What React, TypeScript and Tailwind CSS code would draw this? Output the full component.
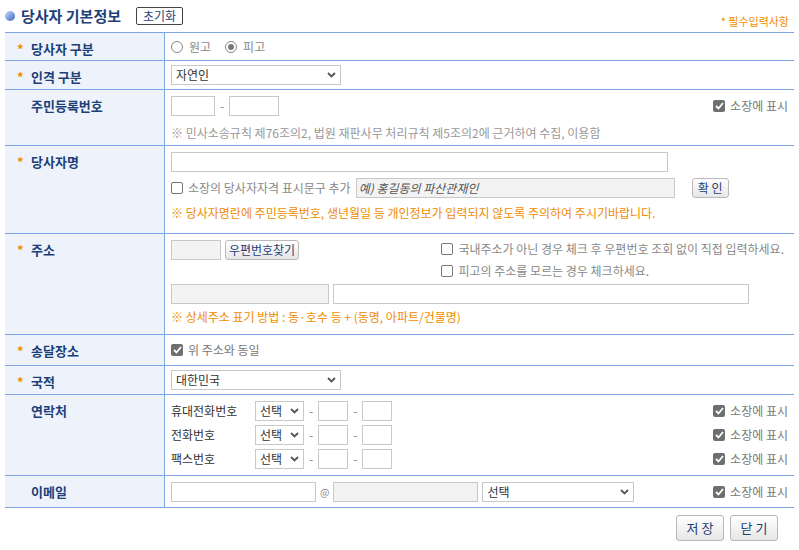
import React from "react"

const font = { fontFamily: '"Noto Sans CJK KR", "Noto Sans", sans-serif' }

function Label({ req, children }: { req?: boolean; children: React.ReactNode }) {
  return (
    <div className="flex w-[160px] shrink-0 border-r border-[#7fa6e3] bg-[#eef3fb] pl-[12px] pt-[6px] text-[13px] font-bold text-[#1d3f78]">
      <span className="w-[14px] text-[#f08c00]">{req ? "*" : ""}</span>
      {children}
    </div>
  )
}

function Row({ h, children }: { h: string; children: React.ReactNode }) {
  return <div className={`flex border-b border-[#7fa6e3] ${h}`}>{children}</div>
}

function Box({ w, gray }: { w: string; gray?: boolean }) {
  return <div className={`h-[20px] border border-[#c8c8c8] ${w} ${gray ? "bg-[#f3f3f3]" : "bg-white"}`} />
}

function Sel({ w, text }: { w: string; text: string }) {
  return (
    <div className={`flex h-[20px] items-center justify-between border border-[#c8c8c8] bg-white px-[4px] text-[12px] text-[#333] ${w}`}>
      <span>{text}</span>
      <svg width="9" height="6" viewBox="0 0 9 6"><path d="M1 1l3.5 3.5L8 1" stroke="#555" strokeWidth="1.8" fill="none" /></svg>
    </div>
  )
}

function Check({ on }: { on?: boolean }) {
  return on ? (
    <span className="flex h-[12px] w-[12px] items-center justify-center rounded-[2px] bg-[#6f6f6f]">
      <svg width="9" height="8" viewBox="0 0 9 8"><path d="M1 4l2.5 2.5L8 1" stroke="white" strokeWidth="1.8" fill="none" /></svg>
    </span>
  ) : (
    <span className="h-[12px] w-[12px] rounded-[2px] border border-[#777] bg-white" />
  )
}

function Btn({ children, w }: { children: React.ReactNode; w: string }) {
  return (
    <div className={`flex h-[20px] items-center justify-center rounded-[3px] border border-[#b9b9b9] bg-gradient-to-b from-white to-[#e6e6e6] text-[12px] text-[#1d3f78] ${w}`}>
      {children}
    </div>
  )
}

function Show() {
  return (
    <span className="flex items-center gap-[5px] text-[12px] text-[#777]">
      <Check on />소장에 표시
    </span>
  )
}

export default function App() {
  return (
    <div className="h-[550px] w-[799px] bg-white text-[12px]" style={font}>
      <div className="flex h-[32px] items-center px-[5px]">
        <span className="h-[10px] w-[10px] rounded-full bg-gradient-to-br from-[#cfe0ff] to-[#3a64b8]" />
        <span className="ml-[6px] text-[15px] font-bold text-[#1d3f78]">당사자 기본정보</span>
        <span className="ml-[15px] flex h-[18px] items-center rounded-[2px] border border-[#444] px-[6px] text-[12px] text-[#1d3f78]">초기화</span>
        <span className="ml-auto mr-[5px] mt-[10px] text-[11px] text-[#f08c00]">* 필수입력사항</span>
      </div>
      <div className="mx-[5px] border-t border-[#7fa6e3]">
        <Row h="h-[28px]">
          <Label req>당사자 구분</Label>
          <div className="flex items-center gap-[6px] pl-[6px] text-[12px] text-[#888]">
            <span className="h-[12px] w-[12px] rounded-full border border-[#888]" />원고
            <span className="ml-[8px] flex h-[12px] w-[12px] items-center justify-center rounded-full border border-[#888]"><span className="h-[6px] w-[6px] rounded-full bg-[#777]" /></span>피고
          </div>
        </Row>
        <Row h="h-[29px]">
          <Label req>인격 구분</Label>
          <div className="flex items-center pl-[6px]"><Sel w="w-[170px]" text="자연인" /></div>
        </Row>
        <Row h="h-[56px]">
          <Label>주민등록번호</Label>
          <div className="flex flex-1 flex-col gap-[8px] px-[6px] pt-[6px]">
            <div className="flex items-center">
              <Box w="w-[44px]" /><span className="mx-[5px] text-[#888]">-</span><Box w="w-[50px]" />
              <span className="ml-auto"><Show /></span>
            </div>
            <div className="text-[12px] text-[#999]">※ 민사소송규칙 제76조의2, 법원 재판사무 처리규칙 제5조의2에 근거하여 수집, 이용함</div>
          </div>
        </Row>
        <Row h="h-[88px]">
          <Label req>당사자명</Label>
          <div className="flex flex-1 flex-col gap-[6px] px-[6px] pt-[6px]">
            <Box w="w-[497px]" />
            <div className="flex items-center gap-[5px] text-[12px] text-[#888]">
              <Check />소장의 당사자자격 표시문구 추가
              <div className="flex h-[20px] w-[319px] items-center border border-[#c8c8c8] bg-[#f3f3f3] px-[2px] italic text-[#555]">예) 홍길동의 파산관재인</div>
              <span className="ml-[12px]"><Btn w="w-[37px]">확 인</Btn></span>
            </div>
            <div className="text-[12px] text-[#f08c00]">※ 당사자명란에 주민등록번호, 생년월일 등 개인정보가 입력되지 않도록 주의하여 주시기바랍니다.</div>
          </div>
        </Row>
        <Row h="h-[101px]">
          <Label req>주소</Label>
          <div className="flex flex-1 flex-col px-[6px] pt-[6px]">
            <div className="flex">
              <Box w="w-[50px]" gray />
              <span className="ml-[4px]"><Btn w="w-[74px]">우편번호찾기</Btn></span>
              <div className="ml-auto flex flex-col gap-[4px] pr-[4px] text-[12px] text-[#888]">
                <span className="flex items-center gap-[5px]"><Check />국내주소가 아닌 경우 체크 후 우편번호 조회 없이 직접 입력하세요.</span>
                <span className="flex items-center gap-[5px]"><Check />피고의 주소를 모르는 경우 체크하세요.</span>
              </div>
            </div>
            <div className="mt-[4px] flex gap-[4px]"><Box w="w-[158px]" gray /><Box w="w-[416px]" /></div>
            <div className="mt-[4px] text-[12px] text-[#f08c00]">※ 상세주소 표기 방법 : 동·호수 등 + (동명, 아파트/건물명)</div>
          </div>
        </Row>
        <Row h="h-[31px]">
          <Label req>송달장소</Label>
          <div className="flex items-center gap-[5px] pl-[6px] text-[12px] text-[#777]"><Check on />위 주소와 동일</div>
        </Row>
        <Row h="h-[29px]">
          <Label req>국적</Label>
          <div className="flex items-center pl-[6px]"><Sel w="w-[170px]" text="대한민국" /></div>
        </Row>
        <Row h="h-[81px]">
          <Label>연락처</Label>
          <div className="flex flex-1 flex-col gap-[4px] px-[6px] pt-[6px]">
            {["휴대전화번호", "전화번호", "팩스번호"].map((t) => (
              <div key={t} className="flex items-center text-[12px] text-[#333]">
                <span className="w-[84px]">{t}</span>
                <Sel w="w-[49px]" text="선택" />
                <span className="mx-[5px] text-[#888]">-</span><Box w="w-[30px]" />
                <span className="mx-[5px] text-[#888]">-</span><Box w="w-[30px]" />
                <span className="ml-auto"><Show /></span>
              </div>
            ))}
          </div>
        </Row>
        <Row h="h-[32px]">
          <Label>이메일</Label>
          <div className="flex flex-1 items-center px-[6px]">
            <Box w="w-[145px]" />
            <span className="mx-[4px] text-[10px] text-[#888]">@</span>
            <Box w="w-[145px]" gray />
            <span className="ml-[4px]"><Sel w="w-[152px]" text="선택" /></span>
            <span className="ml-auto"><Show /></span>
          </div>
        </Row>
      </div>
      <div className="mr-[21px] mt-[7px] flex justify-end gap-[6px]">
        <Btn w="w-[48px] h-[26px] text-[13px]">저 장</Btn>
        <Btn w="w-[48px] h-[26px] text-[13px]">닫 기</Btn>
      </div>
    </div>
  )
}
